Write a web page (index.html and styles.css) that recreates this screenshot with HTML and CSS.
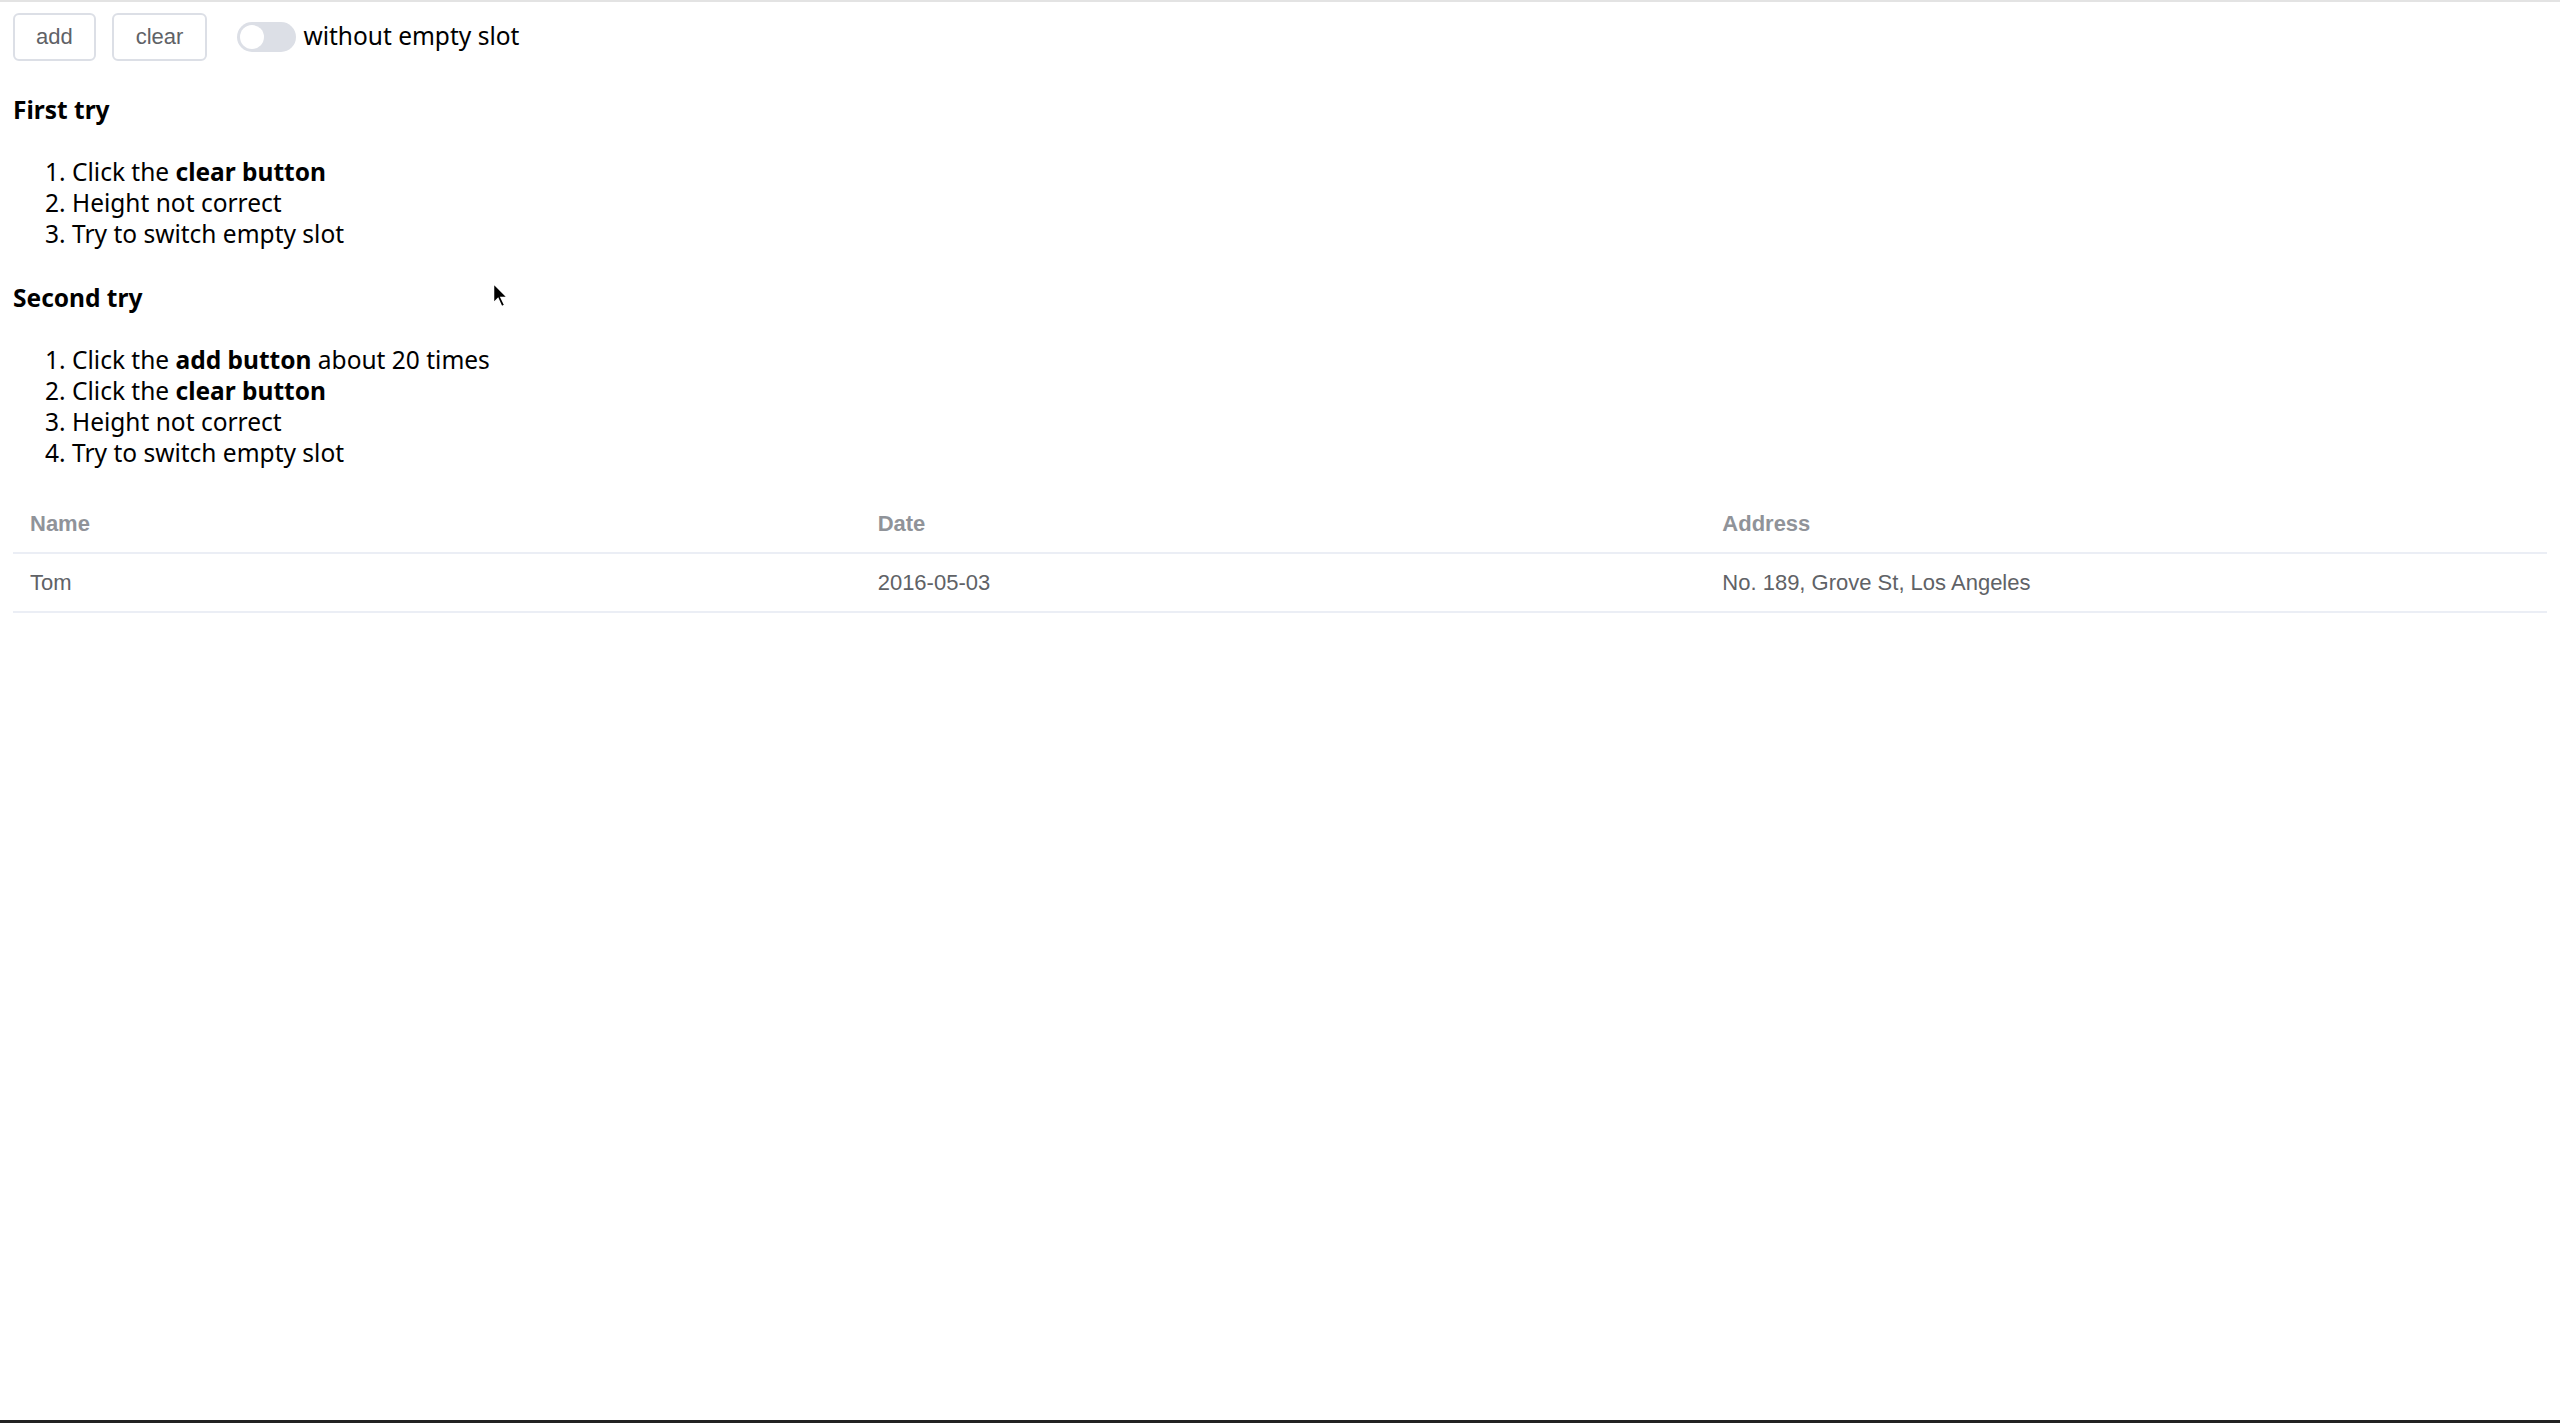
FILE: index.html
```html
<!DOCTYPE html>
<html lang="en">
<head>
    <meta charset="UTF-8">
    <meta name="viewport" content="width=device-width, initial-scale=1.0">
    <title>Table empty slot height</title>
    <link rel="stylesheet" href="styles.css">
</head>
<body>
    <div class="toolbar">
        <button class="btn">add</button>
        <button class="btn">clear</button>
        <span class="switch"><span class="switch-thumb"></span></span>
        <span class="switch-label">without empty slot</span>
    </div>

    <h4>First try</h4>
    <ol class="steps">
        <li>Click the <b>clear button</b></li>
        <li>Height not correct</li>
        <li>Try to switch empty slot</li>
    </ol>

    <h4>Second try</h4>
    <ol class="steps">
        <li>Click the <b>add button</b> about 20 times</li>
        <li>Click the <b>clear button</b></li>
        <li>Height not correct</li>
        <li>Try to switch empty slot</li>
    </ol>

    <table class="data-table">
        <thead>
            <tr>
                <th>Name</th>
                <th>Date</th>
                <th>Address</th>
            </tr>
        </thead>
        <tbody>
            <tr>
                <td>Tom</td>
                <td>2016-05-03</td>
                <td>No. 189, Grove St, Los Angeles</td>
            </tr>
        </tbody>
    </table>

    <!-- mouse pointer from the recording -->
    <svg class="cursor" width="18" height="27" viewBox="0 0 12 18">
        <path d="M1 1 L1 14 L4 11 L6.5 16.5 L8.5 15.5 L6 10.3 L10.3 10.3 Z" fill="#000" stroke="#fff" stroke-width="1"/>
    </svg>
</body>
</html>
```

FILE: styles.css
```css
html {
    height: 100%;
    box-sizing: border-box;
    border-top: 2px solid #e3e3e3;
    border-bottom: 3px solid #222;
}
body {
    margin: 11px 13px 13px;
    font-family: "Noto Sans", "Open Sans", sans-serif;
    font-size: 24.5px;
    color: #000;
    position: relative;
}
.toolbar {
    display: flex;
    align-items: center;
    height: 48px;
}
.btn {
    height: 48px;
    padding: 0 22px;
    margin-right: 16px;
    font-family: "Liberation Sans", Arial, sans-serif;
    font-size: 22px;
    color: #606266;
    background: #fff;
    border: 2px solid #dcdfe6;
    border-radius: 6px;
}
.btn:first-child {
    padding: 0 21px;
}
.btn:last-of-type {
    margin-right: 30px;
}
.switch {
    width: 59px;
    height: 30px;
    border-radius: 15px;
    background-color: #dcdfe6;
    display: flex;
    align-items: center;
    padding: 0 3px;
    box-sizing: border-box;
}
.switch-thumb {
    width: 24px;
    height: 24px;
    border-radius: 50%;
    background-color: #fff;
}
.switch-label {
    margin-left: 7px;
    margin-top: -4px;
}
h4 {
    font-size: 24.5px;
    font-weight: bold;
    line-height: 34px;
    margin: 32px 0 29px;
}
.steps {
    margin: 0;
    padding-left: 59px;
    line-height: 31px;
}
.data-table {
    width: 100%;
    margin-top: 27px;
    border-collapse: collapse;
    table-layout: fixed;
    font-family: "Liberation Sans", Arial, sans-serif;
    font-size: 22px;
}
.data-table th,
.data-table td {
    text-align: left;
    padding: 10px 20px;
    line-height: 37px;
    border-bottom: 2px solid #ebeef5;
}
.data-table th:first-child,
.data-table td:first-child {
    padding-left: 17px;
}
.data-table th {
    color: #909399;
    font-weight: bold;
}
.data-table td {
    color: #606266;
}
.cursor {
    position: absolute;
    left: 479px;
    top: 269px;
}
```
